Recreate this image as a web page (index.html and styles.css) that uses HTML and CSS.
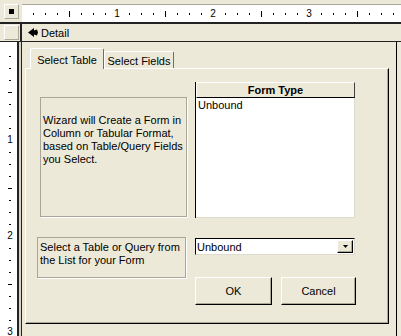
FILE: index.html
```html
<!DOCTYPE html>
<html lang="en">
<head>
    <meta charset="UTF-8">
    <meta name="viewport" content="width=device-width, initial-scale=1.0">
    <title>Form Wizard - Design View</title>
    <link rel="stylesheet" href="styles.css">
</head>
<body>
    <div class="designer">
        <!-- Top left corner selector -->
        <div class="corner">
            <div class="corner-box"><span class="corner-mark"></span></div>
        </div>

        <!-- Horizontal ruler, one cell every 1/8 inch -->
        <div class="hruler">
            <i></i><i></i><i></i><i class="half"></i><i></i><i></i><i></i><b>1</b>
            <i></i><i></i><i></i><i class="half"></i><i></i><i></i><i></i><b>2</b>
            <i></i><i></i><i></i><i class="half"></i><i></i><i></i><i></i><b>3</b>
            <i></i><i></i><i></i><i class="half"></i><i></i><i></i><i></i>
        </div>

        <!-- Section header -->
        <div class="section-corner">
            <div class="corner-box"></div>
        </div>
        <div class="section-bar">
            <svg class="section-icon" width="10" height="9" viewBox="0 0 10 9">
                <path d="M0 4.5 L6 0 L6 2.5 L9 1.5 L10 4.5 L9 7.5 L6 6.5 L6 9 Z" fill="#000"/>
            </svg>
            <span>Detail</span>
        </div>

        <!-- Vertical ruler -->
        <div class="vruler">
            <i></i><i></i><i></i><i class="half"></i><i></i><i></i><i></i><b>1</b>
            <i></i><i></i><i></i><i class="half"></i><i></i><i></i><i></i><b>2</b>
            <i></i><i></i><i></i><i class="half"></i><i></i><i></i><i></i><b>3</b>
        </div>

        <!-- Form canvas -->
        <div class="canvas">
            <div class="form-area">
                <div class="tab-control">
                    <div class="tab-strip">
                        <div class="tab active">Select Table</div>
                        <div class="tab">Select Fields</div>
                    </div>
                    <div class="tab-panel">
                        <div class="col-left">
                            <div class="label-box wizard-note">Wizard will Create a Form in Column or Tabular Format, based on Table/Query Fields you Select.</div>
                            <div class="label-box select-note">Select a Table or Query from the List for your Form</div>
                        </div>
                        <div class="col-right">
                            <div class="listbox">
                                <div class="list-header">Form Type</div>
                                <div class="list-body">Unbound</div>
                            </div>
                            <div class="combo">
                                <span class="combo-value">Unbound</span>
                                <span class="drop-btn">
                                    <svg width="5" height="3" viewBox="0 0 5 3"><path d="M0 0 H5 L2.5 3 Z" fill="#000"/></svg>
                                </span>
                            </div>
                            <div class="buttons">
                                <button type="button" class="btn ok-btn">OK</button>
                                <button type="button" class="btn cancel-btn">Cancel</button>
                            </div>
                        </div>
                    </div>
                </div>
            </div>
        </div>
    </div>
</body>
</html>
```

FILE: styles.css
```css
* {
    box-sizing: border-box;
}

body {
    margin: 0;
    background: #ece9d8;
    font-family: "Liberation Sans", Arial, sans-serif;
    font-size: 11px;
    color: #000;
}

.designer {
    display: grid;
    grid-template-columns: 22px 1fr;
    grid-template-rows: 24px 18px 1fr;
    width: 401px;
    height: 336px;
    overflow: hidden;
}

/* corner boxes */
.corner {
    padding: 4px 0 0 4px;
    border-bottom: 2px solid #222;
}

.corner-box {
    width: 15px;
    height: 15px;
    border: 1px solid;
    border-color: #fff #aca899 #aca899 #fff;
    display: flex;
    align-items: center;
    justify-content: center;
}

.corner-mark {
    width: 5px;
    height: 5px;
    background: #000;
}

/* rulers */
.hruler {
    margin-top: 4px;
    height: 20px;
    background: #fff;
    border-top: 1px solid #aca899;
    border-bottom: 2px solid #222;
    display: flex;
    align-items: center;
    padding-left: 5px;
    overflow: hidden;
}

.hruler i {
    flex: 0 0 12px;
    display: flex;
    padding-left: 6px;
}

.hruler i::before {
    content: "";
    width: 1px;
    height: 2px;
    background: #000;
}

.hruler i.half::before {
    height: 6px;
}

.hruler b,
.vruler b {
    font-weight: normal;
    font-size: 10px;
    text-align: center;
    line-height: 12px;
}

.hruler b {
    flex: 0 0 12px;
}

.section-corner {
    padding: 1px 0 0 4px;
    border-right: 2px solid #222;
    border-bottom: 1px solid #222;
}

.section-bar {
    display: flex;
    align-items: center;
    gap: 3px;
    padding-left: 6px;
    border-bottom: 1px solid #222;
}

.vruler {
    background: linear-gradient(to right, #fff 17px, #222 17px 19px, #d8d4c4 19px 21px, #222 21px);
    padding-top: 8px;
    display: flex;
    flex-direction: column;
}

.vruler i {
    flex: 0 0 12px;
    width: 20px;
    display: flex;
    justify-content: center;
    padding-top: 6px;
}

.vruler i::before {
    content: "";
    width: 2px;
    height: 1px;
    background: #000;
}

.vruler i.half::before {
    width: 4px;
}

.vruler b {
    flex: 0 0 12px;
    width: 20px;
}

/* form canvas */
.form-area {
    width: 375px;
    height: 100%;
    border-right: 1px solid #000;
    padding: 6px 0 0 3px;
}

.tab-control {
    width: 364px;
}

.tab-strip {
    display: flex;
    align-items: flex-end;
    height: 20px;
    padding-left: 5px;
}

.tab {
    width: 70px;
    height: 17px;
    padding-top: 3px;
    line-height: 13px;
    text-align: center;
    border: 1px solid;
    border-bottom: none;
    border-color: #fff #716f64 #716f64 #fff;
    border-radius: 2px 2px 0 0;
    white-space: nowrap;
}

.tab.active {
    width: 74px;
    height: 21px;
    padding-top: 5px;
    margin-bottom: -1px;
    background: #ece9d8;
    position: relative;
    z-index: 1;
}

.tab-panel {
    height: 256px;
    border: 1px solid;
    border-color: #fff #000 #000 #fff;
    box-shadow: inset -1px -1px 0 #aca899;
    padding: 13px 0 0 11px;
    display: flex;
    gap: 9px;
}

.col-left {
    width: 149px;
    display: flex;
    flex-direction: column;
    gap: 20px;
}

.label-box {
    border: 1px solid #a9a697;
    box-shadow: 1px 1px 0 #fff;
    line-height: 13px;
}

.wizard-note {
    margin: 15px 0 0 3px;
    width: 147px;
    height: 120px;
    padding: 16px 2px 0 2px;
}

.select-note {
    height: 41px;
    padding: 3px 2px 0 2px;
}

.col-right {
    width: 162px;
    display: flex;
    flex-direction: column;
}

.listbox {
    width: 160px;
    height: 136px;
    border-left: 1px solid #000;
    display: flex;
    flex-direction: column;
}

.list-header {
    height: 16px;
    font-weight: bold;
    text-align: center;
    line-height: 14px;
    border: 1px solid;
    border-color: #fff #404040 #000 #fff;
}

.list-body {
    flex: 1;
    background: #fff;
    padding: 1px 2px;
    line-height: 13px;
    border-right: 1px solid #dedbcc;
    border-bottom: 1px solid #dedbcc;
}

.combo {
    margin-top: 20px;
    width: 160px;
    height: 17px;
    background: #fff;
    border: 1px solid;
    border-color: #000 #dedbcc #dedbcc #000;
    display: flex;
    align-items: center;
    justify-content: space-between;
    padding: 0 1px 0 1px;
}

.drop-btn {
    width: 16px;
    height: 13px;
    background: #ece9d8;
    border: 1px solid;
    border-color: #fff #000 #000 #fff;
    box-shadow: inset -1px -1px 0 #aca899;
    display: flex;
    align-items: center;
    justify-content: center;
}

.buttons {
    margin-top: 22px;
    display: flex;
    gap: 9px;
}

.btn {
    height: 28px;
    background: #ece9d8;
    font-family: "Liberation Sans", Arial, sans-serif;
    font-size: 11px;
    color: #000;
    border: 1px solid;
    border-color: #fff #000 #000 #fff;
    box-shadow: inset -1px -1px 0 #aca899;
    padding: 0;
}

.ok-btn {
    width: 77px;
}

.cancel-btn {
    width: 75px;
}
```
